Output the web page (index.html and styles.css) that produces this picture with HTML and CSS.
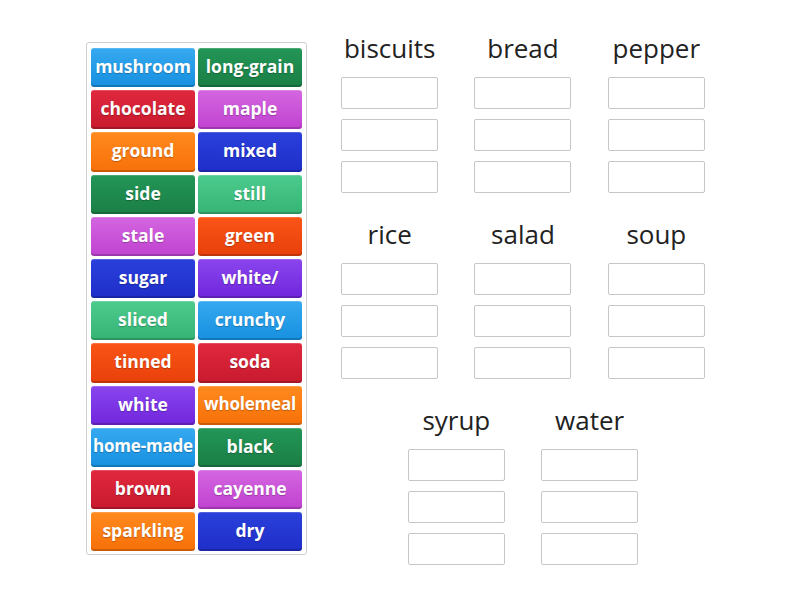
FILE: index.html
```html
<!DOCTYPE html>
<html>
<head>
<meta charset="utf-8">
<link rel="stylesheet" href="styles.css">
</head>
<body>
<div class="page">
  <div class="bank">
    <div class="tile blue">mushroom</div>
    <div class="tile dkgreen">long-grain</div>
    <div class="tile red">chocolate</div>
    <div class="tile magenta">maple</div>
    <div class="tile orange">ground</div>
    <div class="tile indigo">mixed</div>
    <div class="tile dkgreen">side</div>
    <div class="tile mint">still</div>
    <div class="tile magenta">stale</div>
    <div class="tile redorange">green</div>
    <div class="tile indigo">sugar</div>
    <div class="tile purple">white/</div>
    <div class="tile mint">sliced</div>
    <div class="tile blue">crunchy</div>
    <div class="tile redorange">tinned</div>
    <div class="tile red">soda</div>
    <div class="tile purple">white</div>
    <div class="tile orange long">wholemeal</div>
    <div class="tile blue long">home-made</div>
    <div class="tile dkgreen">black</div>
    <div class="tile red">brown</div>
    <div class="tile magenta">cayenne</div>
    <div class="tile orange">sparkling</div>
    <div class="tile indigo">dry</div>
  </div>
  <div class="sorter">
    <div class="group"><div class="heading">biscuits</div><div class="slots"><div class="slot"></div><div class="slot"></div><div class="slot"></div></div></div>
    <div class="group"><div class="heading">bread</div><div class="slots"><div class="slot"></div><div class="slot"></div><div class="slot"></div></div></div>
    <div class="group"><div class="heading">pepper</div><div class="slots"><div class="slot"></div><div class="slot"></div><div class="slot"></div></div></div>
    <div class="group"><div class="heading">rice</div><div class="slots"><div class="slot"></div><div class="slot"></div><div class="slot"></div></div></div>
    <div class="group"><div class="heading">salad</div><div class="slots"><div class="slot"></div><div class="slot"></div><div class="slot"></div></div></div>
    <div class="group"><div class="heading">soup</div><div class="slots"><div class="slot"></div><div class="slot"></div><div class="slot"></div></div></div>
    <div class="group"><div class="heading">syrup</div><div class="slots"><div class="slot"></div><div class="slot"></div><div class="slot"></div></div></div>
    <div class="group"><div class="heading">water</div><div class="slots"><div class="slot"></div><div class="slot"></div><div class="slot"></div></div></div>
  </div>
</div>
</body>
</html>
```
FILE: styles.css
```css
html, body {
  margin: 0;
  padding: 0;
  background: #ffffff;
}
body {
  font-family: "Open Sans", "Liberation Sans", sans-serif;
}
.page {
  display: flex;
  align-items: flex-start;
  padding: 28px 0 0 86px;
}
.bank {
  margin-top: 14px;
  width: 221px;
  box-sizing: border-box;
  border: 1px solid #cfcfcf;
  border-radius: 3px;
  padding: 5px 4px 3px 4px;
  display: grid;
  grid-template-columns: 104px 104px;
  grid-auto-rows: 39.2px;
  column-gap: 3px;
  row-gap: 3px;
}
.tile {
  display: flex;
  align-items: center;
  justify-content: center;
  border-radius: 3px;
  color: #ffffff;
  font-weight: 700;
  font-size: 17.5px;
  white-space: nowrap;
  text-shadow: 0 1px 1px rgba(0,0,0,0.25);
  box-shadow: inset 0 -2px 0 rgba(0,0,0,0.18), inset 0 1px 0 rgba(255,255,255,0.18);
  overflow: hidden;
  padding-bottom: 3px;
  box-sizing: border-box;
}
.tile.long { font-size: 17px; letter-spacing: -0.2px; }
.blue { background: linear-gradient(#36a9f0, #1790e0); }
.dkgreen { background: linear-gradient(#239657, #1a7e45); }
.red { background: linear-gradient(#e0283d, #c81a2e); }
.magenta { background: linear-gradient(#d466e0, #c042d0); }
.orange { background: linear-gradient(#ff8a1e, #f77008); }
.indigo { background: linear-gradient(#2a40db, #1f2ec8); }
.mint { background: linear-gradient(#4ccb8e, #35b474); }
.redorange { background: linear-gradient(#fb5417, #e8400a); }
.purple { background: linear-gradient(#8a45ee, #7026dc); }

.sorter {
  margin-left: 16px;
  width: 400px;
  display: flex;
  flex-wrap: wrap;
  justify-content: center;
  row-gap: 21px;
}
.group {
  width: 133.33px;
  display: flex;
  flex-direction: column;
  align-items: center;
}
.heading {
  height: 40px;
  line-height: 40px;
  font-size: 26px;
  color: #222222;
}
.slots {
  margin-top: 9px;
  display: flex;
  flex-direction: column;
  gap: 10px;
}
.slot {
  width: 97px;
  height: 32px;
  box-sizing: border-box;
  border: 1px solid #c6c6c6;
  border-radius: 2px;
  background: #ffffff;
}
```
